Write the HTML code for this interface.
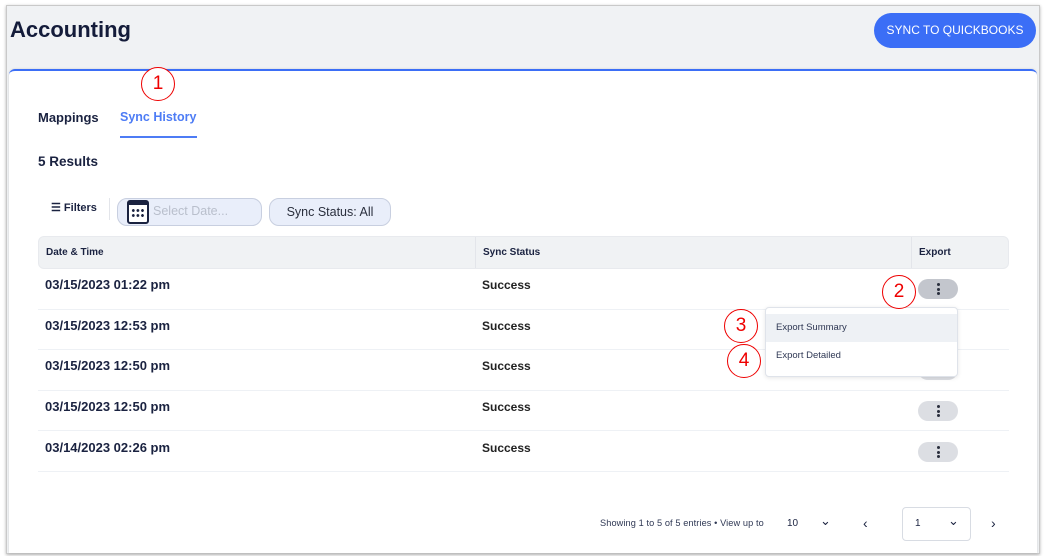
<!DOCTYPE html>
<html><head><style>
*{margin:0;padding:0;box-sizing:border-box}
body{width:1045px;height:556px;background:#fff;font-family:"Liberation Sans",sans-serif;position:relative;overflow:hidden;color:#1a2240}
.a{position:absolute;white-space:nowrap}
.win{left:6px;top:5px;width:1034px;height:549px;border:1px solid #c9c9c9;background:#f0f2f4;box-shadow:0 1px 3px rgba(0,0,0,.3)}
.card{left:9px;top:69px;width:1028px;height:484px;background:#fff;border-top:2px solid #3b6ef6;border-radius:6px 6px 0 0;box-shadow:0 0 2px rgba(0,0,0,.15)}
.circ{width:34px;height:34px;border:1.5px solid #e00;border-radius:50%;color:#e00;font-size:19px;text-align:center;line-height:31px;background:#fff}
.row{left:38px;width:971px;height:41px;border-bottom:1px solid #eef1f5}
.d{font-weight:bold;font-size:13px;color:#1a2240}
.dots{width:40px;height:20px;background:#dcdee3;border-radius:10px}
.dots i{position:absolute;left:19px;width:3px;height:3px;border-radius:50%;background:#2a2f3d}
</style></head><body>
<div class="a win"></div>
<div class="a" style="left:10px;top:17px;font-size:22px;font-weight:bold;color:#141c3a">Accounting</div>
<div class="a" style="left:874px;top:13px;width:162px;height:35px;border-radius:18px;background:#3b6ef6;color:#fff;font-size:12px;text-align:center;line-height:35px">SYNC TO QUICKBOOKS</div>
<div class="a card"></div>
<div class="a" style="left:38px;top:110px;font-size:13px;font-weight:bold">Mappings</div>
<div class="a" style="left:120px;top:110px;font-size:12.5px;font-weight:bold;color:#4d7cf5">Sync History</div>
<div class="a" style="left:120px;top:136px;width:77px;height:2px;background:#4d7cf5"></div>
<div class="a circ" style="left:141px;top:67px">1</div>
<div class="a" style="left:38px;top:154px;font-size:13.5px;font-weight:bold">5 Results</div>
<div class="a" style="left:51px;top:201px;font-size:11px;font-weight:bold">☰ Filters</div>
<div class="a" style="left:109px;top:198px;width:1px;height:22px;background:#e3e5ea"></div>
<div class="a" style="left:117px;top:198px;width:145px;height:28px;border:1px solid #c8cfe0;border-radius:10px;background:#e9eefa"></div>
<div class="a" style="left:127px;top:200px;width:22px;height:24px;border:2.5px solid #1a2240;border-top-width:5px;border-radius:3px;background:#fff"></div>
<div class="a" style="left:131px;top:208px;width:14px;height:10px;background:radial-gradient(circle,#1a2240 1.3px,transparent 1.5px) 0 0/4.6px 5px"></div>
<div class="a" style="left:153px;top:204px;font-size:12.5px;color:#b9bfcc">Select Date...</div>
<div class="a" style="left:269px;top:198px;width:122px;height:28px;border:1px solid #c8cfe0;border-radius:10px;background:#e9eefa;font-size:12.5px;text-align:center;line-height:26px;color:#2a2f3d">Sync Status: All</div>
<div class="a" style="left:38px;top:236px;width:971px;height:33px;background:#f0f2f4;border-radius:6px;border:1px solid #e8eaee"></div>
<div class="a" style="left:475px;top:237px;width:1px;height:31px;background:#e3e5ea"></div>
<div class="a" style="left:911px;top:237px;width:1px;height:31px;background:#e3e5ea"></div>
<div class="a d" style="left:46px;top:247px;font-size:10px">Date &amp; Time</div>
<div class="a d" style="left:483px;top:247px;font-size:10px">Sync Status</div>
<div class="a d" style="left:919px;top:247px;font-size:10px">Export</div>
<div class="a row" style="top:269px"></div>
<div class="a row" style="top:309px"></div>
<div class="a row" style="top:350px"></div>
<div class="a row" style="top:390px"></div>
<div class="a row" style="top:431px"></div>
<div class="a d" style="left:45px;top:277px">03/15/2023 01:22 pm</div>
<div class="a d" style="left:45px;top:318px">03/15/2023 12:53 pm</div>
<div class="a d" style="left:45px;top:358px">03/15/2023 12:50 pm</div>
<div class="a d" style="left:45px;top:399px">03/15/2023 12:50 pm</div>
<div class="a d" style="left:45px;top:440px">03/14/2023 02:26 pm</div>
<div class="a d" style="left:482px;top:278px;font-size:12px;color:#222">Success</div>
<div class="a d" style="left:482px;top:319px;font-size:12px;color:#222">Success</div>
<div class="a d" style="left:482px;top:359px;font-size:12px;color:#222">Success</div>
<div class="a d" style="left:482px;top:400px;font-size:12px;color:#222">Success</div>
<div class="a d" style="left:482px;top:441px;font-size:12px;color:#222">Success</div>
<div class="a dots" style="left:918px;top:279px;background:#c3c6cd"><i style="top:4px"></i><i style="top:8.5px"></i><i style="top:13px"></i></div>
<div class="a dots" style="left:918px;top:360px"></div>
<div class="a dots" style="left:918px;top:401px"><i style="top:4px"></i><i style="top:8.5px"></i><i style="top:13px"></i></div>
<div class="a dots" style="left:918px;top:442px"><i style="top:4px"></i><i style="top:8.5px"></i><i style="top:13px"></i></div>
<div class="a" style="left:765px;top:307px;width:193px;height:70px;background:#fff;border:1px solid #dfe3ea;border-radius:4px;box-shadow:0 1px 4px rgba(0,0,0,.1)"></div>
<div class="a" style="left:766px;top:314px;width:191px;height:28px;background:#eef1f5"></div>
<div class="a" style="left:776px;top:322px;font-size:9.5px;color:#2f3854">Export Summary</div>
<div class="a" style="left:776px;top:350px;font-size:9.5px;color:#2f3854">Export Detailed</div>
<div class="a circ" style="left:882px;top:275px">2</div>
<div class="a circ" style="left:724px;top:309px">3</div>
<div class="a circ" style="left:727px;top:344px">4</div>
<div class="a" style="left:600px;top:518px;font-size:9.2px;color:#2f3854;letter-spacing:.1px">Showing 1 to 5 of 5 entries • View up to</div>
<div class="a" style="left:787px;top:518px;font-size:10px">10</div>
<div class="a" style="left:820px;top:513px;font-size:13px">⌄</div>
<div class="a" style="left:863px;top:515px;font-size:14px">‹</div>
<div class="a" style="left:902px;top:507px;width:69px;height:34px;border:1px solid #d8dce3;border-radius:4px"></div>
<div class="a" style="left:915px;top:518px;font-size:10px">1</div>
<div class="a" style="left:948px;top:513px;font-size:13px">⌄</div>
<div class="a" style="left:991px;top:515px;font-size:14px">›</div>
</body></html>
